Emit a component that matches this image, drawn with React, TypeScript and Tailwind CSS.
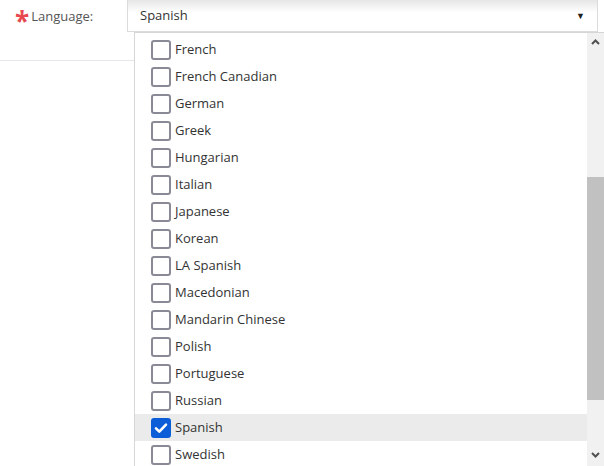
import React from 'react';

const languages = [
  'French',
  'French Canadian',
  'German',
  'Greek',
  'Hungarian',
  'Italian',
  'Japanese',
  'Korean',
  'LA Spanish',
  'Macedonian',
  'Mandarin Chinese',
  'Polish',
  'Portuguese',
  'Russian',
  'Spanish',
  'Swedish',
];

function Checkbox({ checked }: { checked: boolean }) {
  if (checked) {
    return (
      <span className="flex h-[20px] w-[20px] shrink-0 items-center justify-center rounded-[3px] bg-[#0b5ed7]">
        <svg width="16" height="16" viewBox="0 0 16 16" fill="none">
          <path d="M3 8.3l3.3 3.3L13 4.6" stroke="#fff" strokeWidth="2.6" strokeLinecap="round" strokeLinejoin="round" />
        </svg>
      </span>
    );
  }
  return <span className="h-[20px] w-[20px] shrink-0 rounded-[3px] border-2 border-[#8a8a96] bg-white" />;
}

export default function App() {
  const selected = 'Spanish';

  return (
    <div className="relative h-[466px] w-[604px] overflow-hidden bg-white text-[13px] font-['Open_Sans',sans-serif]">
      {/* form row */}
      <div className="flex h-[32px]">
        <div className="flex w-[127px] items-center pl-[15px] pt-[2px]">
          <span className="mr-[2px] translate-y-[4px] text-[26px] font-bold leading-none text-[#e8474f]">*</span>
          <span className="text-[#555]">Language:</span>
        </div>
        <div className="flex w-[471px] items-center justify-between border-b border-l border-r border-[#dcdcdc] bg-gradient-to-b from-[#e6e6e6] via-white via-40% to-white pl-[12px] pr-[12px]">
          <span className="text-[#333]">{selected}</span>
          <span className="text-[9px] text-[#222]">▼</span>
        </div>
      </div>
      <div className="mt-[28px] h-px w-[134px] bg-[#e5e7eb]" />

      {/* dropdown menu */}
      <div className="absolute left-[134px] top-[32px] flex h-[440px] w-[470px] border-l border-t border-[#d6d6d6] bg-white">
        <ul className="flex-1 pt-[3px]">
          {languages.map((lang) => {
            const checked = lang === selected;
            return (
              <li
                key={lang}
                className={`flex h-[27px] items-center gap-[4px] pl-[16px] text-[#333] ${checked ? 'bg-[#ebebeb]' : ''}`}
              >
                <Checkbox checked={checked} />
                <span>{lang}</span>
              </li>
            );
          })}
        </ul>
        <div className="flex w-[17px] flex-col bg-[#f1f1f1]">
          <div className="flex h-[17px] items-center justify-center">
            <svg width="9" height="6" viewBox="0 0 9 6">
              <path d="M1 5l3.5-3.5L8 5" stroke="#505050" strokeWidth="2" fill="none" />
            </svg>
          </div>
          <div className="mt-[127px] h-[223px] bg-[#c1c1c1]" />
          <div className="flex-1" />
          <div className="mb-[9px] flex h-[17px] items-center justify-center">
            <svg width="9" height="6" viewBox="0 0 9 6">
              <path d="M1 1l3.5 3.5L8 1" stroke="#505050" strokeWidth="2" fill="none" />
            </svg>
          </div>
        </div>
      </div>
    </div>
  );
}
